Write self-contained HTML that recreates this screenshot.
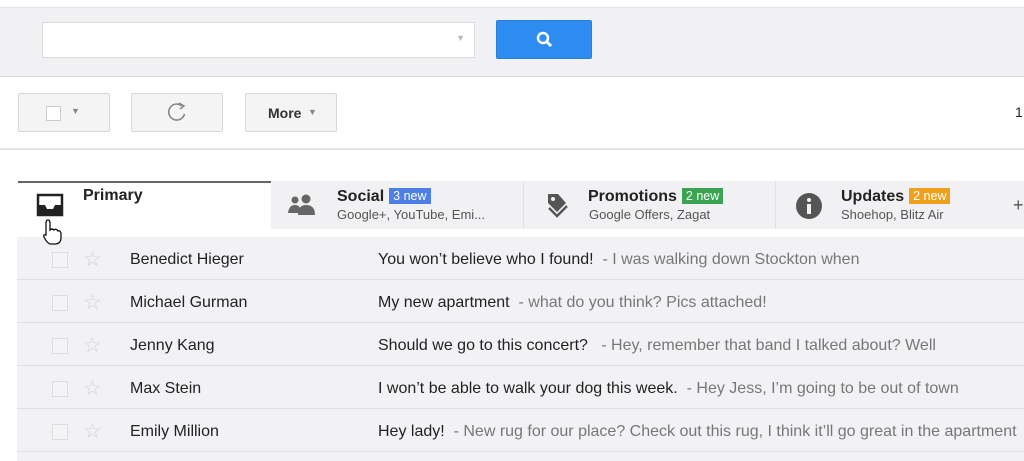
<!DOCTYPE html>
<html><head><style>
*{margin:0;padding:0;box-sizing:border-box}
body{width:1024px;height:461px;overflow:hidden;background:#fff;font-family:"Liberation Sans",Arial,sans-serif;position:relative}
.abs{position:absolute}
.band{left:0;top:7px;width:1024px;height:70px;background:#f1f0f3;border-top:1px solid #e2e2e2;border-bottom:1px solid #dcdcdc}
.search{left:42px;top:22px;width:433px;height:36px;background:#fff;border:1px solid #dadada}
.sbtn{left:496px;top:20px;width:96px;height:39px;background:#2d8cf0;border:1px solid #2a7ed8;border-radius:2px}
.btn{top:93px;height:39px;background:#f4f4f5;border:1px solid #d8d8d8;border-radius:2px}
.hr{left:0;top:148px;width:1024px;height:2px;background:#e4e4e4}
.tabs{left:18px;top:181px;width:1006px;height:48px;background:#f1f1f3}
.tab{top:181px;height:48px}
.tt{font-size:16px;font-weight:bold;color:#222}
.ts{font-size:13px;color:#555}
.badge{display:inline-block;color:#fff;font-size:12.5px;font-weight:normal;padding:1px 4px;margin-left:5px;vertical-align:1px}
.rows{left:17px;top:237px;width:1007px;height:224px;background:#f2f2f5}
.row{left:17px;width:1007px;height:43px;border-bottom:1px solid #dfdfe2}
.cb{position:absolute;left:35px;top:15px;width:16px;height:16px;border:1px solid #dcdcdc;background:#f4f4f6}
.st{position:absolute;left:66px;top:10px;font-size:21px;color:#d2d2d2}
.nm{position:absolute;left:113px;top:14px;font-size:16px;color:#222}
.sj{position:absolute;left:361px;top:14px;font-size:16px;color:#222;white-space:nowrap}
.sj span{color:#777}
</style></head><body>
<div class="abs band"></div>
<div class="abs search"><span style="position:absolute;right:9px;top:10px;font-size:9px;color:#bbb">▼</span></div>
<div class="abs sbtn"><svg width="96" height="39" style="position:absolute;left:0;top:0"><circle cx="46" cy="17" r="5" fill="none" stroke="#fff" stroke-width="2.5"/><line x1="49.5" y1="20.5" x2="54" y2="25" stroke="#fff" stroke-width="3"/></svg></div>

<div class="abs btn" style="left:18px;width:92px"><div style="position:absolute;left:27px;top:12px;width:15px;height:15px;border:1px solid #ccc;background:#fff"></div><span style="position:absolute;left:52px;top:12px;font-size:9px;color:#888">▼</span></div>
<div class="abs btn" style="left:131px;width:92px"><svg width="92" height="39" style="position:absolute;left:0;top:0"><path d="M50 12 A8 8 0 1 0 52.5 20" fill="none" stroke="#888" stroke-width="1.6"/><path d="M47 9 L52 12 L48 15" fill="none" stroke="#888" stroke-width="1.5"/></svg></div>
<div class="abs btn" style="left:245px;width:92px"><span style="position:absolute;left:22px;top:11px;font-size:14px;font-weight:bold;color:#333">More</span><span style="position:absolute;left:62px;top:13px;font-size:9px;color:#888">▼</span></div>
<div class="abs" style="left:1015px;top:104px;font-size:14px;color:#222">1</div>
<div class="abs hr"></div>

<div class="abs tabs"></div>
<div class="abs tab" style="left:18px;width:253px;background:#fff;border-top:2px solid #666"></div>
<div class="abs" style="left:523px;top:181px;width:1px;height:48px;background:#e2e2e2"></div>
<div class="abs" style="left:775px;top:181px;width:1px;height:48px;background:#e2e2e2"></div>
<svg class="abs" style="left:35px;top:192px" width="32" height="26"><path d="M3 3 H27 V23 H3 Z" fill="none" stroke="#222" stroke-width="2.5"/><path d="M3 13 H10 L12 17 H18 L20 13 H27 V23 H3 Z" fill="#222"/></svg>
<div class="abs tt" style="left:83px;top:187px">Primary</div>

<svg class="abs" style="left:288px;top:193px" width="32" height="24"><circle cx="7" cy="7" r="3.5" fill="#666"/><circle cx="18" cy="6" r="4.5" fill="#666"/><path d="M0 20 Q1 12 7 12 Q11 12 12 15 V20 Z M10 22 Q10 12 18 12 Q27 12 27 22 Z" fill="#666"/></svg>
<div class="abs tt" style="left:337px;top:188px">Social<span class="badge" style="background:#4c80e6">3 new</span></div>
<div class="abs ts" style="left:337px;top:207px">Google+, YouTube, Emi...</div>

<svg class="abs" style="left:545px;top:191px" width="26" height="30"><path d="M3 3 H13 L21 12 L12 21 L3 12 Z" fill="#555"/><circle cx="8" cy="8" r="2" fill="#f1f1f3"/><path d="M4 17 L12 25 L22 15" fill="none" stroke="#555" stroke-width="2.4"/></svg>
<div class="abs tt" style="left:588px;top:188px">Promotions<span class="badge" style="background:#3aa451">2 new</span></div>
<div class="abs ts" style="left:589px;top:207px">Google Offers, Zagat</div>

<svg class="abs" style="left:796px;top:193px" width="28" height="28"><circle cx="13" cy="13" r="13" fill="#555"/><circle cx="13" cy="7" r="2" fill="#f1f1f3"/><rect x="11" y="11" width="4" height="10" fill="#f1f1f3"/></svg>
<div class="abs tt" style="left:841px;top:188px">Updates<span class="badge" style="background:#f0a11c">2 new</span></div>
<div class="abs ts" style="left:841px;top:207px">Shoehop, Blitz Air</div>
<div class="abs" style="left:1013px;top:195px;font-size:18px;color:#555">+</div>

<div class="abs rows"></div>
<div class="abs row" style="top:237px"><div class="cb"></div><div class="st">☆</div><div class="nm">Benedict Hieger</div><div class="sj">You won’t believe who I found! <span>&nbsp;- I was walking down Stockton when</span></div></div>
<div class="abs row" style="top:280px"><div class="cb"></div><div class="st">☆</div><div class="nm">Michael Gurman</div><div class="sj">My new apartment <span>&nbsp;- what do you think? Pics attached!</span></div></div>
<div class="abs row" style="top:323px"><div class="cb"></div><div class="st">☆</div><div class="nm">Jenny Kang</div><div class="sj">Should we go to this concert? <span>&nbsp;&nbsp;- Hey, remember that band I talked about? Well</span></div></div>
<div class="abs row" style="top:366px"><div class="cb"></div><div class="st">☆</div><div class="nm">Max Stein</div><div class="sj">I won’t be able to walk your dog this week. <span>&nbsp;- Hey Jess, I’m going to be out of town</span></div></div>
<div class="abs row" style="top:409px"><div class="cb"></div><div class="st">☆</div><div class="nm">Emily Million</div><div class="sj">Hey lady! <span>&nbsp;- New rug for our place? Check out this rug, I think it’ll go great in the apartment</span></div></div>
<svg class="abs" style="left:40px;top:219px;z-index:5" width="24" height="26"><path d="M6 4 Q6 1 8 1 Q10 1 10 4 V11 Q12 9 14 11 Q16 9 18 12 Q20 11 21 14 V19 Q21 24 16 25 H10 Q7 24 4 18 Q3 15 6 16 V4 Z" fill="#fff" stroke="#111" stroke-width="1.3"/></svg>
</body></html>
